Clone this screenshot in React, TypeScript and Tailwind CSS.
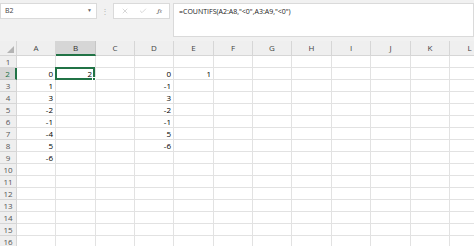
import { Check, X } from "lucide-react";

const cols = ["A", "B", "C", "D", "E", "F", "G", "H", "I", "J", "K", "L"];
const widths = [39, 40, 39, 39, 40, 39, 39, 40, 39, 40, 39, 40];

const data: Record<string, string> = {
  A2: "0",
  A3: "1",
  A4: "3",
  A5: "-2",
  A6: "-1",
  A7: "-4",
  A8: "5",
  A9: "-6",
  B2: "2",
  D2: "0",
  D3: "-1",
  D4: "3",
  D5: "-2",
  D6: "-1",
  D7: "5",
  D8: "-6",
  E2: "1",
};

const rows = Array.from({ length: 16 }, (_, i) => i + 1);

function Toolbar() {
  return (
    <div className="flex h-[41px] items-start bg-[#f1f1f1] pt-[3px] text-[#444]">
      <div className="flex h-[16px] w-[97px] items-center justify-between border border-[#dadada] bg-white pl-[4px] pr-[4px] text-[7px]">
        <span>B2</span>
        <span className="text-[5px] text-[#666]">▼</span>
      </div>
      <div className="flex h-[16px] w-[16px] items-center justify-center text-[8px] text-[#b5b5b5]">
        ⋮
      </div>
      <div className="flex h-[16px] w-[57px] items-center justify-around border border-[#dadada] bg-white px-[2px] text-[#b0b0b0]">
        <X size={8} strokeWidth={1.5} />
        <Check size={8} strokeWidth={1.5} />
        <span className="text-[7px] italic text-[#555]">
          <span className="font-serif">f</span>
          <span className="text-[5px]">x</span>
        </span>
      </div>
      <div className="ml-[3px] h-[34px] flex-1 border border-[#dadada] bg-white pl-[5px] pt-[3px] text-[7px] leading-[9px] text-[#222]">
        =COUNTIFS(A2:A8,"&lt;0",A3:A9,"&lt;0")
      </div>
    </div>
  );
}

export default function App() {
  return (
    <div className="h-[246px] w-[474px] overflow-hidden bg-white font-['Open_Sans',sans-serif]">
      <Toolbar />
      <div className="flex h-[15px] bg-[#efefef] text-[8px] text-[#444]">
        <div className="relative w-[17px] shrink-0 border-r border-b border-[#d6d6d6]">
          <div className="absolute bottom-[2px] right-[2px] h-0 w-0 border-b-[7px] border-l-[7px] border-b-[#b4b4b4] border-l-transparent" />
        </div>
        {cols.map((c, i) => (
          <div
            key={c}
            style={{ width: widths[i] }}
            className={
              c === "B"
                ? "flex shrink-0 items-center justify-center border-r border-b-2 border-r-[#c6c6c6] border-b-[#217346] bg-[#d6d6d6] text-[#333]"
                : "flex shrink-0 items-center justify-center border-r border-b border-[#d6d6d6]"
            }
          >
            {c}
          </div>
        ))}
      </div>
      {rows.map((r) => (
        <div key={r} className="flex h-[12px] text-[8px] leading-none">
          <div
            className={
              r === 2
                ? "flex w-[17px] shrink-0 items-center justify-center border-r-2 border-b border-r-[#217346] border-b-[#c6c6c6] bg-[#d6d6d6] text-[#217346]"
                : "flex w-[17px] shrink-0 items-center justify-center border-r border-b border-[#d6d6d6] bg-[#efefef] text-[#555]"
            }
          >
            {r}
          </div>
          {cols.map((c, i) => {
            const key = `${c}${r}`;
            const sel = key === "B2";
            return (
              <div
                key={key}
                style={{ width: widths[i] }}
                className={
                  sel
                    ? "relative flex shrink-0 items-center justify-end border-r border-b border-[#e2e2e2] pr-[3px] text-black"
                    : "relative flex shrink-0 items-center justify-end border-r border-b border-[#e2e2e2] pr-[2px] text-black"
                }
              >
                {data[key]}
                {sel && (
                  <div className="absolute -top-[1px] -left-[1px] h-[13px] w-[40px] border-2 border-[#217346]">
                    <div className="absolute -right-[3px] -bottom-[3px] h-[4px] w-[4px] border border-white bg-[#217346]" />
                  </div>
                )}
              </div>
            );
          })}
        </div>
      ))}
    </div>
  );
}
